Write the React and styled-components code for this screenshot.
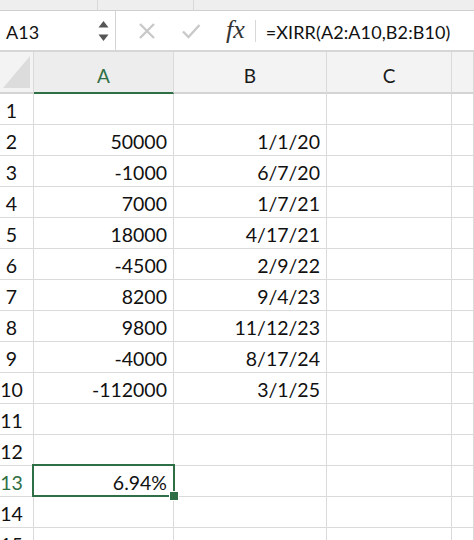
import React from 'react';
import styled, { createGlobalStyle } from 'styled-components';

const GlobalStyle = createGlobalStyle`
  html, body {
    margin: 0;
    padding: 0;
    background: #ffffff;
    overflow: hidden;
  }
  body {
    font-family: Lato, "Open Sans", sans-serif;
    color: #111;
  }
`;

const GREEN = '#2f6f45';
const GRID = '#dadada';

const colA = [null, '50000', '-1000', '7000', '18000', '-4500', '8200', '9800', '-4000', '-112000', null, null, '6.94%', null, null];
const colB = [null, '1/1/20', '6/7/20', '1/7/21', '4/17/21', '2/9/22', '9/4/23', '11/12/23', '8/17/24', '3/1/25', null, null, null, null, null];

const Page = styled.div`
  width: 474px;
  height: 540px;
  overflow: hidden;
  display: flex;
  flex-direction: column;
`;

const RibbonEdge = styled.div`
  height: 10px;
  flex: none;
  background: #eeeeee;
  border-bottom: 1px solid #cfcfcf;
  display: flex;
`;

const RibbonTick = styled.div`
  width: ${(p) => p.w}px;
  border-right: 1px solid #d8d8d8;
`;

const FormulaBar = styled.div`
  height: 39px;
  flex: none;
  display: flex;
  align-items: stretch;
  border-bottom: 2px solid #d6d6d6;
  background: #fff;
`;

const NameBox = styled.div`
  width: 116px;
  display: flex;
  align-items: center;
  justify-content: space-between;
  padding: 2px 6px 0 6px;
  box-sizing: border-box;
  border-right: 1px solid #d4d4d4;
  font-size: 18px;
  color: #111;
`;

const Spinner = styled.svg`
  width: 11px;
  height: 22px;
  margin-top: -2px;
`;

const Actions = styled.div`
  display: flex;
  align-items: center;
  padding-left: 21px;
  gap: 24px;
`;

const ActionIcon = styled.svg`
  width: 20px;
  height: 20px;
`;

const Fx = styled.span`
  font-family: "Liberation Serif", "DejaVu Serif", serif;
  font-style: italic;
  font-size: 26px;
  color: #333;
  margin-left: 1px;
  padding-bottom: 2px;
`;

const Divider = styled.div`
  width: 1px;
  align-self: center;
  height: 22px;
  background: #d8d8d8;
  margin-left: 10px;
`;

const FormulaText = styled.div`
  display: flex;
  align-items: center;
  padding: 2px 0 0 10px;
  font-size: 18px;
  letter-spacing: 0.1px;
  white-space: nowrap;
  color: #111;
`;

const Grid = styled.div`
  display: grid;
  grid-template-columns: 34px 140px 153px 125px 1fr;
  grid-auto-rows: 31px;
  grid-template-rows: 42px;
`;

const Corner = styled.div`
  background: #f3f3f3;
  border-right: 1px solid ${GRID};
  border-bottom: 2px solid #d4d4d4;
  display: flex;
  align-items: flex-end;
  justify-content: flex-end;
  padding: 0 3px 4px 0;
`;

const ColHead = styled.div`
  background: ${(p) => (p.active ? '#ededed' : '#f3f3f3')};
  border-right: 1px solid ${GRID};
  border-bottom: 2px solid ${(p) => (p.active ? GREEN : '#d4d4d4')};
  color: ${(p) => (p.active ? GREEN : '#1a1a1a')};
  display: flex;
  align-items: center;
  justify-content: center;
  padding-top: 7px;
  font-size: 19px;
`;

const RowHead = styled.div`
  border-right: 1px solid ${GRID};
  border-bottom: 1px solid ${GRID};
  color: ${(p) => (p.active ? GREEN : '#111')};
  display: flex;
  align-items: flex-end;
  justify-content: center;
  padding: 0 10px 2px 0;
  font-size: 19.5px;
`;

const Cell = styled.div`
  position: relative;
  z-index: ${(p) => (p.selected ? 2 : 'auto')};
  border-right: 1px solid ${GRID};
  border-bottom: 1px solid ${GRID};
  display: flex;
  align-items: flex-end;
  justify-content: flex-end;
  padding: 0 6px 2px 0;
  font-size: 19.5px;
  color: #111;
`;

const Selection = styled.div`
  position: absolute;
  top: -2px;
  left: -2px;
  right: -2px;
  bottom: -1px;
  border: 2px solid ${GREEN};
  pointer-events: none;
`;

const FillHandle = styled.div`
  position: absolute;
  right: -6px;
  bottom: -6px;
  width: 8px;
  height: 8px;
  background: ${GREEN};
  border: 1px solid #fff;
`;

function App() {
  return (
    <Page>
      <GlobalStyle />
      <RibbonEdge>
        <RibbonTick w={97} />
        <RibbonTick w={95} />
      </RibbonEdge>

      <FormulaBar>
        <NameBox>
          <span>A13</span>
          <Spinner viewBox="0 0 11 22">
            <path d="M5.5 1 L10.5 7.5 L0.5 7.5 Z" fill="#555" />
            <path d="M5.5 21 L10.5 14.5 L0.5 14.5 Z" fill="#555" />
          </Spinner>
        </NameBox>
        <Actions>
          <ActionIcon viewBox="0 0 20 20">
            <path d="M3 3 L17 17 M17 3 L3 17" stroke="#c9c9c9" strokeWidth="2.4" fill="none" />
          </ActionIcon>
          <ActionIcon viewBox="0 0 20 20">
            <path d="M2 10.5 L7.5 16 L18.5 4" stroke="#c9c9c9" strokeWidth="2.4" fill="none" />
          </ActionIcon>
          <Fx>fx</Fx>
        </Actions>
        <Divider />
        <FormulaText>=XIRR(A2:A10,B2:B10)</FormulaText>
      </FormulaBar>

      <Grid>
        <Corner>
          <svg width="27" height="32" viewBox="0 0 27 32">
            <path d="M27 0 L27 32 L0 32 Z" fill="#dcdcdc" />
          </svg>
        </Corner>
        <ColHead active>A</ColHead>
        <ColHead>B</ColHead>
        <ColHead>C</ColHead>
        <ColHead />

        {colA.map((a, i) => (
          <React.Fragment key={i}>
            <RowHead active={i === 12}>{i + 1}</RowHead>
            <Cell selected={i === 12}>
              {a}
              {i === 12 && (
                <Selection>
                  <FillHandle />
                </Selection>
              )}
            </Cell>
            <Cell>{colB[i]}</Cell>
            <Cell />
            <Cell />
          </React.Fragment>
        ))}
      </Grid>
    </Page>
  );
}

export default App;
